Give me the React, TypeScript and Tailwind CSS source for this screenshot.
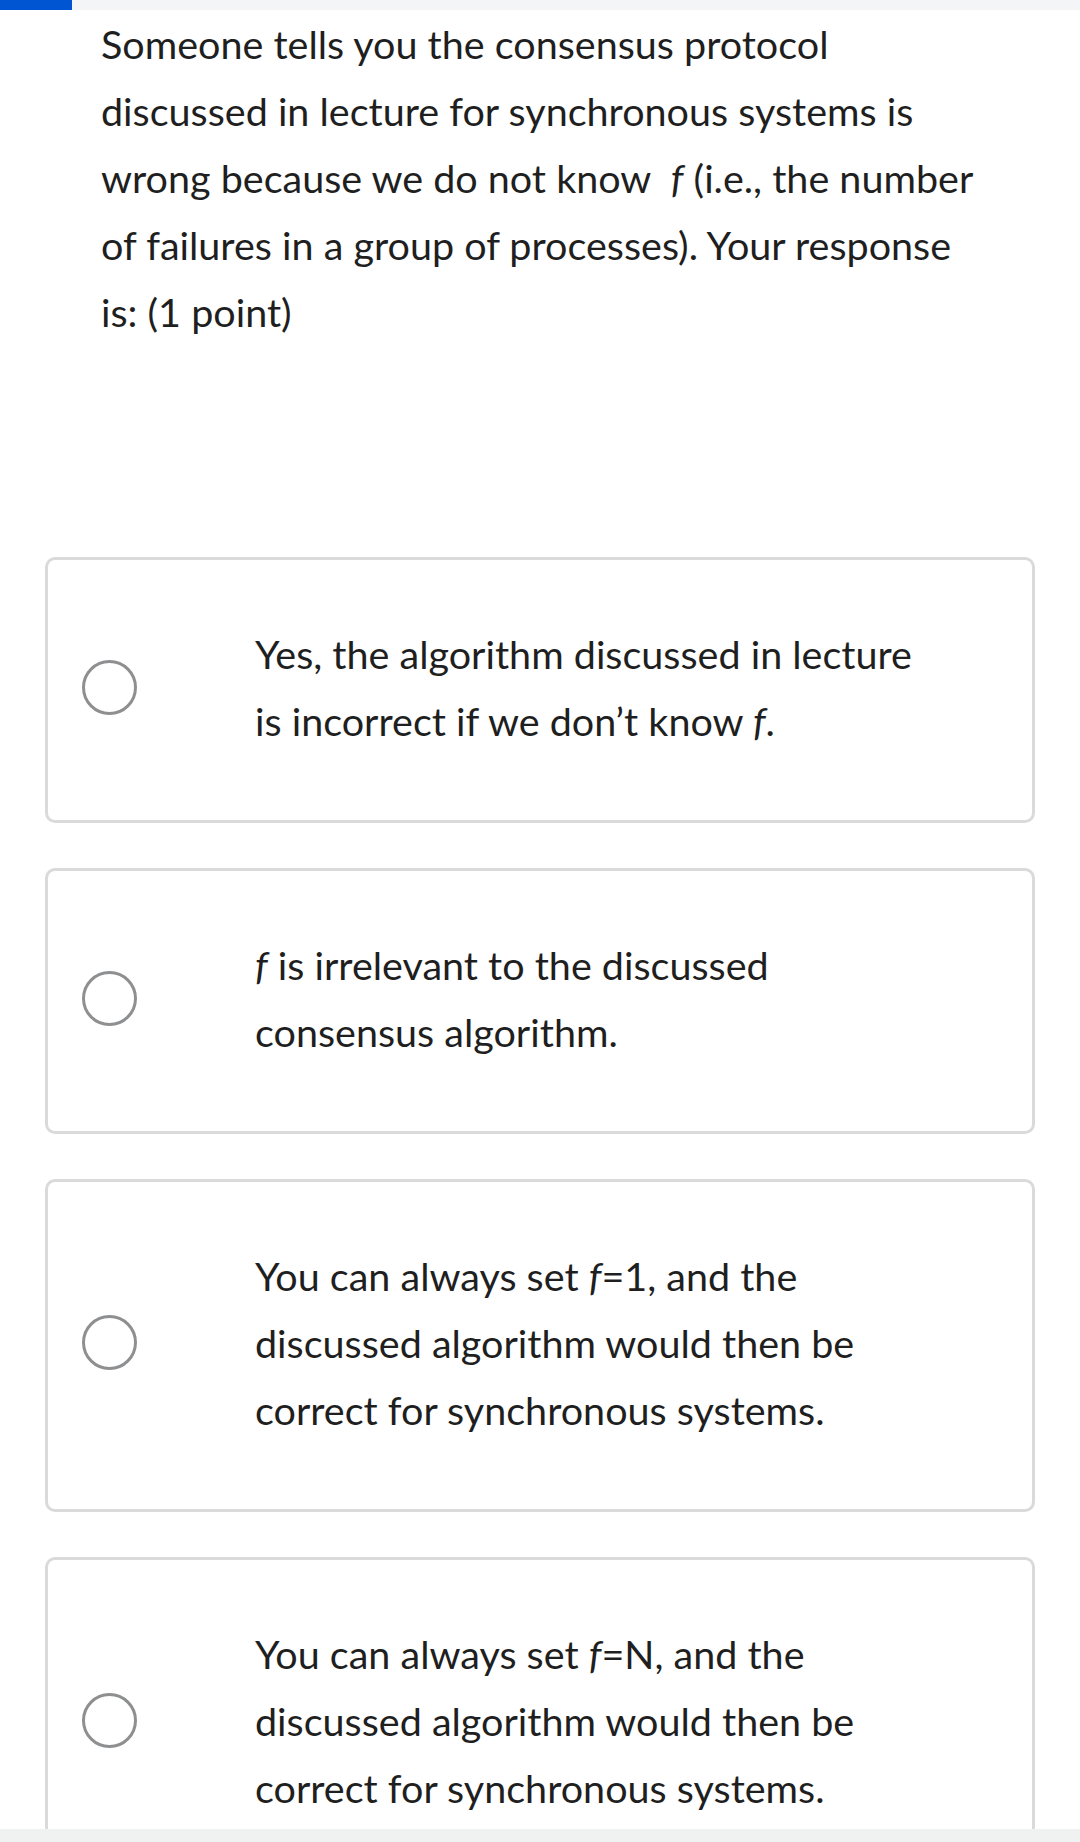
import type { ReactNode } from "react";

const F = () => <em className="italic">f</em>;

const question: ReactNode[] = [
  "Someone tells you the consensus protocol",
  "discussed in lecture for synchronous systems is",
  <>wrong because we do not know&nbsp; <F /> (i.e., the number</>,
  "of failures in a group of processes). Your response",
  "is: (1 point)",
];

const options: ReactNode[][] = [
  ["Yes, the algorithm discussed in lecture", <>is incorrect if we don’t know <F />.</>],
  [<><F /> is irrelevant to the discussed</>, "consensus algorithm."],
  [<>You can always set <F />=1, and the</>, "discussed algorithm would then be", "correct for synchronous systems."],
  [<>You can always set <F />=N, and the</>, "discussed algorithm would then be", "correct for synchronous systems."],
];

function Option({ lines }: { lines: ReactNode[] }) {
  return (
    <label className="flex items-center rounded-[10px] border-[3px] border-[#dadada] bg-white pl-[34px] pt-[60px] pb-[66px] cursor-pointer">
      <span className="shrink-0 size-[55px] rounded-full border-[3px] border-[#8e8f91] bg-white" />
      <span className="ml-[118px] flex flex-col">
        {lines.map((l, i) => (
          <span key={i} className="whitespace-nowrap">{l}</span>
        ))}
      </span>
    </label>
  );
}

export default function App() {
  return (
    <div className="min-h-screen bg-white text-[#1f1f1f] text-[39.5px] leading-[67px] font-['Lato',sans-serif]">
      {/* progress bar */}
      <div className="h-[10px] bg-[#f4f5f7]">
        <div className="h-full w-[72px] bg-[#0056d2]" />
      </div>

      <div className="pl-[101px] pr-[90px]">
        {question.map((l, i) => (
          <div key={i} className="whitespace-nowrap">{l}</div>
        ))}
      </div>

      <div className="mt-[212px] mx-[45px] flex flex-col gap-[45px] pb-10">
        {options.map((o, i) => (
          <Option key={i} lines={o} />
        ))}
      </div>

      <div className="fixed bottom-0 inset-x-0 h-[13px] bg-[#f0f1f1]" />
    </div>
  );
}
